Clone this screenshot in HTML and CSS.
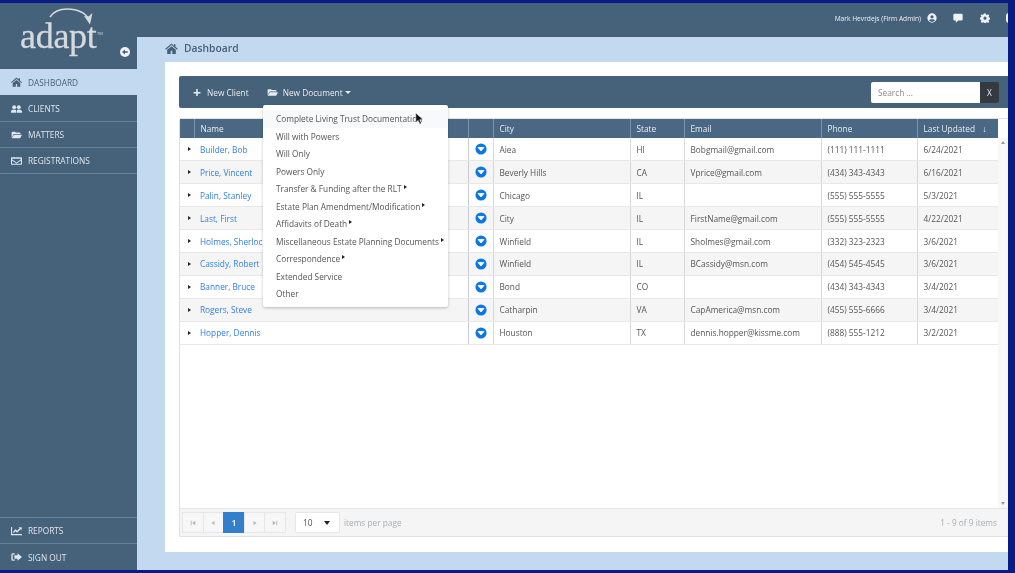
FILE: index.html
```html
<!DOCTYPE html>
<html lang="en">
<head>
<meta charset="utf-8">
<title>Adapt Dashboard</title>
<link rel="stylesheet" href="styles.css">
</head>
<body>
<svg class="defs" width="0" height="0" aria-hidden="true">
  <symbol id="i-home" viewBox="0 0 16 14"><path d="M8 .6 0 7.400l1 1.100L8 2.600l7 5.900 1-1.100-3-2.500V1.500h-2v2zM2.500 8.600V14H7V10h2v4h4.500V8.600L8 4z" fill="currentColor"/></symbol>
  <symbol id="i-users" viewBox="0 0 18 14"><circle cx="5.200" cy="4" r="3.200" fill="currentColor"/><circle cx="12.800" cy="4" r="3.200" fill="currentColor"/><path d="M0 13V11C0 9 2 7.800 5.200 7.800S8.500 9 8.500 11v2zM9.500 13V11c0-2 .3-3.200 3.300-3.200S18 9 18 11v2z" fill="currentColor"/></symbol>
  <symbol id="i-folder" viewBox="0 0 18 14"><path d="M1 3c0-1 .5-1.500 1.500-1.500h4L8 3h6c1 0 1.500.5 1.500 1.500V5.500H4.500L1 11zM4.800 6.500H18l-3 6H1z" fill="currentColor"/></symbol>
  <symbol id="i-mail" viewBox="0 0 16 14"><path fill-rule="evenodd" d="M1 1.500h14a1 1 0 0 1 1 1v9a1 1 0 0 1-1 1H1a1 1 0 0 1-1-1v-9a1 1 0 0 1 1-1zm.5 2.200v.8L8 9l6.500-4.500v-.8zm0 2.600v4.700h13V6.300L8 10.800z" fill="currentColor"/></symbol>
  <symbol id="i-chart" viewBox="0 0 16 14"><path d="M0 1h1.600v10.400H16V13H0zM3 8l3.500-3.500 2.500 2L12.500 3 11 1.500h4.500V6L14 4.500 9 9.500 6.500 7.500 4 10z" fill="currentColor"/></symbol>
  <symbol id="i-signout" viewBox="0 0 16 14"><path d="M5.500 1.500H2.500A2 2 0 0 0 .5 3.500v7a2 2 0 0 0 2 2h3v-1.800h-3V3.300h3zM9.500 1.500 16 7l-6.500 5.500V9.500H5v-5h4.500z" fill="currentColor"/></symbol>
  <symbol id="i-down" viewBox="0 0 14 14"><circle cx="7" cy="7" r="6.500" fill="#0b76e8"/><path d="M3.500 5.200h7L7 9.300z" fill="#fff" stroke="#fff" stroke-linejoin="round"/></symbol>
  <symbol id="i-first" viewBox="0 0 8 8"><path d="M1 1h1.200v6H1zM7 1v6L3 4z" fill="currentColor"/></symbol>
  <symbol id="i-prev" viewBox="0 0 8 8"><path d="M6 1v6L2 4z" fill="currentColor"/></symbol>
  <symbol id="i-next" viewBox="0 0 8 8"><path d="M2 1v6l4-3z" fill="currentColor"/></symbol>
  <symbol id="i-last" viewBox="0 0 8 8"><path d="M7 1H5.800v6H7zM1 1v6l4-3z" fill="currentColor"/></symbol>
</svg>
<div class="app">
  <aside class="sidebar">
    <div class="brand">
      <div class="logo">
        <svg class="logo-arc" viewBox="0 0 46 24" aria-hidden="true"><path d="M1 9C5 3 12 1 18 1c10 0 19 4 23 12" fill="none" stroke="#d5dade" stroke-width="1.400"/><path d="m35 8 6 8.500L43.500 5 39.500 8.500z" fill="#d5dade"/></svg>
        <span class="logo-word">adapt</span><span class="logo-tm">TM</span>
      </div>
      <svg class="collapse" viewBox="0 0 10 10" aria-hidden="true"><circle cx="5" cy="5" r="5" fill="#eef1f3"/><path d="M7.800 4.300H5V2.500L2 5l3 2.500V5.700h2.800z" fill="#46617a"/></svg>
    </div>
    <nav class="nav">
      <a class="nav-item active"><svg class="nav-icon"><use href="#i-home"/></svg>DASHBOARD</a>
      <a class="nav-item"><svg class="nav-icon"><use href="#i-users"/></svg>CLIENTS</a>
      <a class="nav-item"><svg class="nav-icon"><use href="#i-folder"/></svg>MATTERS</a>
      <a class="nav-item"><svg class="nav-icon"><use href="#i-mail"/></svg>REGISTRATIONS</a>
    </nav>
    <nav class="nav nav-bottom">
      <a class="nav-item"><svg class="nav-icon"><use href="#i-chart"/></svg>REPORTS</a>
      <a class="nav-item"><svg class="nav-icon"><use href="#i-signout"/></svg>SIGN OUT</a>
    </nav>
  </aside>
  <div class="main">
    <header class="topbar">
      <span class="user">Mark Hevrdejs (Firm Admin)</span>
      <svg class="top-icon" viewBox="0 0 14 14"><path fill-rule="evenodd" fill="currentColor" d="M7 .5a6.500 6.500 0 1 1 0 13 6.500 6.500 0 0 1 0-13zM7 3a2.300 2.300 0 1 0 0 4.600A2.300 2.300 0 0 0 7 3zM2.900 10.600C4 12 5.500 12.400 7 12.400s3-.4 4.100-1.800C10.500 9.300 9 8.800 7 8.800s-3.500.5-4.100 1.800z"/></svg>
      <svg class="top-icon gap-a" viewBox="0 0 14 14"><path fill="currentColor" d="M2 1h10a1.500 1.500 0 0 1 1.500 1.500v6.500A1.500 1.500 0 0 1 12 10.500H7.500L4 13.500v-3H2A1.500 1.500 0 0 1 .5 9V2.500A1.500 1.500 0 0 1 2 1z"/></svg>
      <svg class="top-icon gap-b" viewBox="0 0 14 14"><path fill-rule="evenodd" fill="currentColor" d="m5.800.6h2.400l.4 1.800 1.100.5 1.600-1 1.700 1.700-1 1.600.5 1.100 1.800.4v2.400l-1.800.4-.5 1.100 1 1.600-1.700 1.700-1.600-1-1.100.5-.4 1.800H5.800l-.4-1.800-1.100-.5-1.600 1L1 12l1-1.600-.5-1.100-1.800-.4V6.500l1.800-.4.5-1.100-1-1.600L1.700 1.700l1.600 1 1.100-.5zM7 5a2.200 2.200 0 1 0 0 4.400A2.200 2.200 0 0 0 7 5z"/></svg>
      <span class="top-clip"></span>
    </header>
    <div class="crumb">
      <svg class="crumb-icon"><use href="#i-home"/></svg>
      <span>Dashboard</span>
    </div>
    <section class="panel">
      <div class="toolbar">
        <button class="tool-btn"><span class="plus">&#43;</span>New Client</button>
        <button class="tool-btn"><svg class="tool-icon"><use href="#i-folder"/></svg>New Document<span class="caret"></span></button>
        <div class="search">
          <span class="search-input">Search ...</span>
          <span class="search-x">X</span>
        </div>
      </div>
      <div class="grid">
        <div class="grid-body">
          <table class="table">
            <colgroup>
              <col class="c-exp"><col class="c-name"><col class="c-act"><col class="c-city"><col class="c-state"><col class="c-email"><col class="c-phone"><col class="c-upd">
            </colgroup>
            <thead>
              <tr><th></th><th>Name</th><th></th><th>City</th><th>State</th><th>Email</th><th>Phone</th><th>Last Updated <span class="sort">&#8595;</span></th></tr>
            </thead>
            <tbody>
              <tr><td class="exp"><i></i></td><td><a>Builder, Bob</a></td><td class="act"><svg><use href="#i-down"/></svg></td><td>Aiea</td><td>HI</td><td>Bobgmail@gmail.com</td><td>(111) 111-1111</td><td>6/24/2021</td></tr>
              <tr><td class="exp"><i></i></td><td><a>Price, Vincent</a></td><td class="act"><svg><use href="#i-down"/></svg></td><td>Beverly Hills</td><td>CA</td><td>Vprice@gmail.com</td><td>(434) 343-4343</td><td>6/16/2021</td></tr>
              <tr><td class="exp"><i></i></td><td><a>Palin, Stanley</a></td><td class="act"><svg><use href="#i-down"/></svg></td><td>Chicago</td><td>IL</td><td></td><td>(555) 555-5555</td><td>5/3/2021</td></tr>
              <tr><td class="exp"><i></i></td><td><a>Last, First</a></td><td class="act"><svg><use href="#i-down"/></svg></td><td>City</td><td>IL</td><td>FirstName@gmail.com</td><td>(555) 555-5555</td><td>4/22/2021</td></tr>
              <tr><td class="exp"><i></i></td><td><a>Holmes, Sherlock</a></td><td class="act"><svg><use href="#i-down"/></svg></td><td>Winfield</td><td>IL</td><td>Sholmes@gmail.com</td><td>(332) 323-2323</td><td>3/6/2021</td></tr>
              <tr><td class="exp"><i></i></td><td><a>Cassidy, Robert</a></td><td class="act"><svg><use href="#i-down"/></svg></td><td>Winfield</td><td>IL</td><td>BCassidy@msn.com</td><td>(454) 545-4545</td><td>3/6/2021</td></tr>
              <tr><td class="exp"><i></i></td><td><a>Banner, Bruce</a></td><td class="act"><svg><use href="#i-down"/></svg></td><td>Bond</td><td>CO</td><td></td><td>(434) 343-4343</td><td>3/4/2021</td></tr>
              <tr><td class="exp"><i></i></td><td><a>Rogers, Steve</a></td><td class="act"><svg><use href="#i-down"/></svg></td><td>Catharpin</td><td>VA</td><td>CapAmerica@msn.com</td><td>(455) 555-6666</td><td>3/4/2021</td></tr>
              <tr><td class="exp"><i></i></td><td><a>Hopper, Dennis</a></td><td class="act"><svg><use href="#i-down"/></svg></td><td>Houston</td><td>TX</td><td>dennis.hopper@kissme.com</td><td>(888) 555-1212</td><td>3/2/2021</td></tr>
            </tbody>
          </table>
          <div class="scrollbar"><i class="sb-up"></i><i class="sb-down"></i></div>
        </div>
        <div class="pager">
          <div class="pages">
            <span class="page"><svg><use href="#i-first"/></svg></span><span class="page"><svg><use href="#i-prev"/></svg></span><span class="page current">1</span><span class="page"><svg><use href="#i-next"/></svg></span><span class="page"><svg><use href="#i-last"/></svg></span>
          </div>
          <div class="size"><span>10</span><span class="size-caret"></span></div>
          <span class="per">items per page</span>
          <span class="count">1 - 9 of 9 items</span>
        </div>
      </div>
      <ul class="menu">
        <li class="hover">Complete Living Trust Documentation</li>
        <li>Will with Powers</li>
        <li>Will Only</li>
        <li>Powers Only</li>
        <li class="sub">Transfer &amp; Funding after the RLT</li>
        <li class="sub">Estate Plan Amendment/Modification</li>
        <li class="sub">Affidavits of Death</li>
        <li class="sub">Miscellaneous Estate Planning Documents</li>
        <li class="sub">Correspondence</li>
        <li>Extended Service</li>
        <li>Other</li>
      </ul>
      <svg class="cursor" viewBox="0 0 10 16"><path d="M1 1v12l3-2.800L6 15l2-1-2-4.500h4z" fill="#111" stroke="#fff" stroke-width=".6"/></svg>
    </section>
  </div>
</div>
</body>
</html>
```
FILE: styles.css
```css
* { box-sizing: border-box; }
html, body { height: 100%; }
body {
  margin: 0;
  padding: 3px 7px 3px 0;
  background: #0b1b86;
  font-family: "Open Sans", "Noto Sans", sans-serif;
  font-size: 8.300px;
  color: #555;
  overflow: hidden;
}
.defs { position: absolute; }
.app { display: flex; height: 100%; filter: blur(.4px); }

.sidebar {
  width: 137px;
  flex: none;
  display: flex;
  flex-direction: column;
  background: #46617a;
  color: #dfe6ec;
}
.brand { height: 66px; flex: none; position: relative; }
.logo { position: relative; width: 90px; height: 60px; }
.logo-arc { position: absolute; left: 49px; top: 5px; width: 46px; height: 24px; }
.logo-word {
  position: absolute;
  left: 20px;
  top: 13px;
  font-family: "Liberation Serif", serif;
  font-size: 36px;
  letter-spacing: -.3px;
  -webkit-text-stroke: .3px #d5dade;
  color: #d5dade;
  line-height: 40px;
}
.logo-tm { position: absolute; left: 97px; top: 28px; font-size: 4px; color: #d5dade; }
.collapse { position: absolute; left: 120px; top: 44px; width: 10px; height: 10px; }
.nav { display: flex; flex-direction: column; }
.nav-bottom { margin-top: auto; border-top: 1px solid #66809a; }
.nav-item {
  height: 26px;
  display: flex;
  align-items: center;
  gap: 6px;
  padding-left: 11px;
  font-size: 8.300px;
  border-bottom: 1px solid #66809a;
}
.nav-bottom .nav-item:last-child { border-bottom: 0; }
.nav-item.active { background: #c2d9ef; color: #4c6074; border-bottom-color: #46617a; height: 27px; }
.nav-icon { width: 11px; height: 10px; flex: none; }

.main { flex: 1; min-width: 0; display: flex; flex-direction: column; background: #c2d9ef; position: relative; }
.topbar {
  height: 34px;
  flex: none;
  display: flex;
  align-items: center;
  justify-content: flex-end;
  background: #46617a;
  color: #eef2f5;
  padding-bottom: 4px;
  overflow: hidden;
}
.user { font-size: 6.650px; margin-right: 6px; }
.top-icon { width: 10px; height: 10px; }
.gap-a { margin-left: 16px; }
.gap-b { margin-left: 17px; }
.top-clip { width: 3px; height: 10px; margin-left: 16px; margin-right: -1px; border-radius: 3px 0 0 3px; background: #eef2f5; }
.crumb {
  height: 25px;
  flex: none;
  display: flex;
  align-items: center;
  gap: 6px;
  padding: 0 0 3px 28px;
  color: #46617a;
  font-size: 10.300px;
  font-weight: 600;
}
.crumb-icon { width: 13px; height: 11px; }
.panel {
  position: relative;
  flex: 1;
  margin: 0 0 18px 28px;
  padding: 14px 0 15px 14px;
  background: #fff;
  display: flex;
  flex-direction: column;
  min-height: 0;
}
.toolbar {
  height: 32px;
  flex: none;
  display: flex;
  align-items: center;
  background: #46617a;
  border-radius: 2px 0 0 2px;
  padding: 1px 0 0 14px;
  margin-bottom: 10px;
}
.tool-btn {
  display: flex;
  align-items: center;
  background: none;
  border: 0;
  padding: 0;
  font: inherit;
  color: #e6ecf1;
}
.tool-btn + .tool-btn { margin-left: 18px; }
.plus { font-size: 14px; line-height: 10px; font-weight: 700; margin-right: 6px; }
.tool-icon { width: 11px; height: 9px; margin-right: 5px; }
.caret {
  width: 0;
  height: 0;
  margin-left: 2px;
  border: 3px solid transparent;
  border-top-color: #e6ecf1;
  border-bottom: 0;
}
.search { display: flex; margin-left: auto; margin-right: 9px; height: 21px; }
.search-input {
  width: 109px;
  background: #fff;
  border-radius: 2px 0 0 2px;
  padding-left: 7px;
  line-height: 21px;
  color: #888;
}
.search-x {
  width: 19px;
  background: #343a40;
  color: #eee;
  border-radius: 0 2px 2px 0;
  text-align: center;
  line-height: 21px;
}

.grid {
  flex: 1;
  min-height: 0;
  display: flex;
  flex-direction: column;
  border: 1px solid #dee2e6;
  border-right: 0;
  border-radius: 2px 0 0 2px;
}
.grid-body { flex: 1; min-height: 0; display: flex; align-items: stretch; }
.table { flex: 1; align-self: flex-start; border-collapse: collapse; table-layout: fixed; width: 818px; }
.c-exp { width: 14px; }
.c-name { width: 274px; }
.c-act { width: 25px; }
.c-city { width: 137px; }
.c-state { width: 54px; }
.c-email { width: 137px; }
.c-phone { width: 96px; }
.c-upd { width: 81px; }
.table th {
  height: 19px;
  background: #4a6883;
  color: #e9eef2;
  font-weight: 400;
  font-size: 8.300px;
  text-align: left;
  padding: 0 6px;
  border-left: 1px solid #7d93a8;
}
.table th:first-child { border-left: 0; }
.sort { margin-left: 5px; font-size: 9px; }
.table td {
  height: 22.900px;
  padding: 0 6px;
  font-size: 8.300px;
  color: #555;
  border-left: 1px solid #d5d8db;
  border-bottom: 1px solid #e6e8ea;
  white-space: nowrap;
  overflow: hidden;
}
.table tbody tr:nth-child(even) td { background: #f5f5f5; }
.table td:first-child { border-left: 0; }
.table td.exp { padding: 0 0 0 8px; border-left: 0; }
.exp i {
  display: block;
  width: 0;
  height: 0;
  border: 2px solid transparent;
  border-left: 3px solid #222;
  border-right: 0;
}
.table td:nth-child(2) { border-left: 0; }
.table a { color: #2f80e4; }
.table td.act { padding: 0 0 0 6px; border-left: 1px solid #c9ccd0; border-right: 1px solid #d5d8db; }
.act svg { display: block; width: 12px; height: 12px; }

.scrollbar {
  width: 10px;
  flex: none;
  margin-top: 19px;
  padding: 3px 0 3px 3px;
  display: flex;
  flex-direction: column;
  justify-content: space-between;
  background: #f8f8f8;
}
.sb-up, .sb-down { width: 0; height: 0; border: 2px solid transparent; }
.sb-up { border-bottom: 3px solid #999; border-top: 0; }
.sb-down { border-top: 3px solid #999; border-bottom: 0; }

.pager {
  height: 28px;
  flex: none;
  display: flex;
  align-items: center;
  padding-left: 2px;
  background: #f5f5f5;
  border-top: 1px solid #e4e6e8;
  color: #a9adb1;
}
.pages { display: flex; }
.page {
  width: 21.600px;
  height: 21px;
  display: flex;
  align-items: center;
  justify-content: center;
  border: 1px solid #e6e7e8;
  margin-left: -1px;
  background: #f7f7f7;
  color: #b5b8bb;
}
.page svg { width: 6px; height: 6px; }
.page:first-child { margin-left: 0; }
.page.current { background: #337fcb; border-color: #337fcb; color: #fff; font-size: 8.800px; font-weight: 600; }
.size {
  width: 45px;
  height: 21px;
  margin-left: 9px;
  padding: 0 9px 0 7px;
  display: flex;
  align-items: center;
  justify-content: space-between;
  background: #fff;
  border: 1px solid #e6e7e8;
  border-radius: 2px;
  color: #555;
}
.size-caret { width: 0; height: 0; border: 3px solid transparent; border-top: 4px solid #222; border-bottom: 0; }
.per { margin-left: 4px; }
.count { margin-left: auto; margin-right: 11px; }

.menu {
  position: absolute;
  left: 98px;
  top: 43px;
  width: 185px;
  height: 202px;
  margin: 0;
  padding: 5px 0 0;
  list-style: none;
  background: #fff;
  border-radius: 2px;
  box-shadow: 0 1px 3px rgba(0, 0, 0, .25);
  color: #555;
}
.menu li { height: 17.500px; line-height: 17.500px; padding-left: 13px; white-space: nowrap; }
.menu li.hover { background: #f8f9fa; }
.menu li.sub::after {
  content: "";
  display: inline-block;
  margin-left: 2px;
  vertical-align: 3px;
  border: 2.500px solid transparent;
  border-left: 3px solid #222;
  border-right: 0;
}
.cursor { position: absolute; left: 250px; top: 50px; width: 8px; height: 13px; }
```
